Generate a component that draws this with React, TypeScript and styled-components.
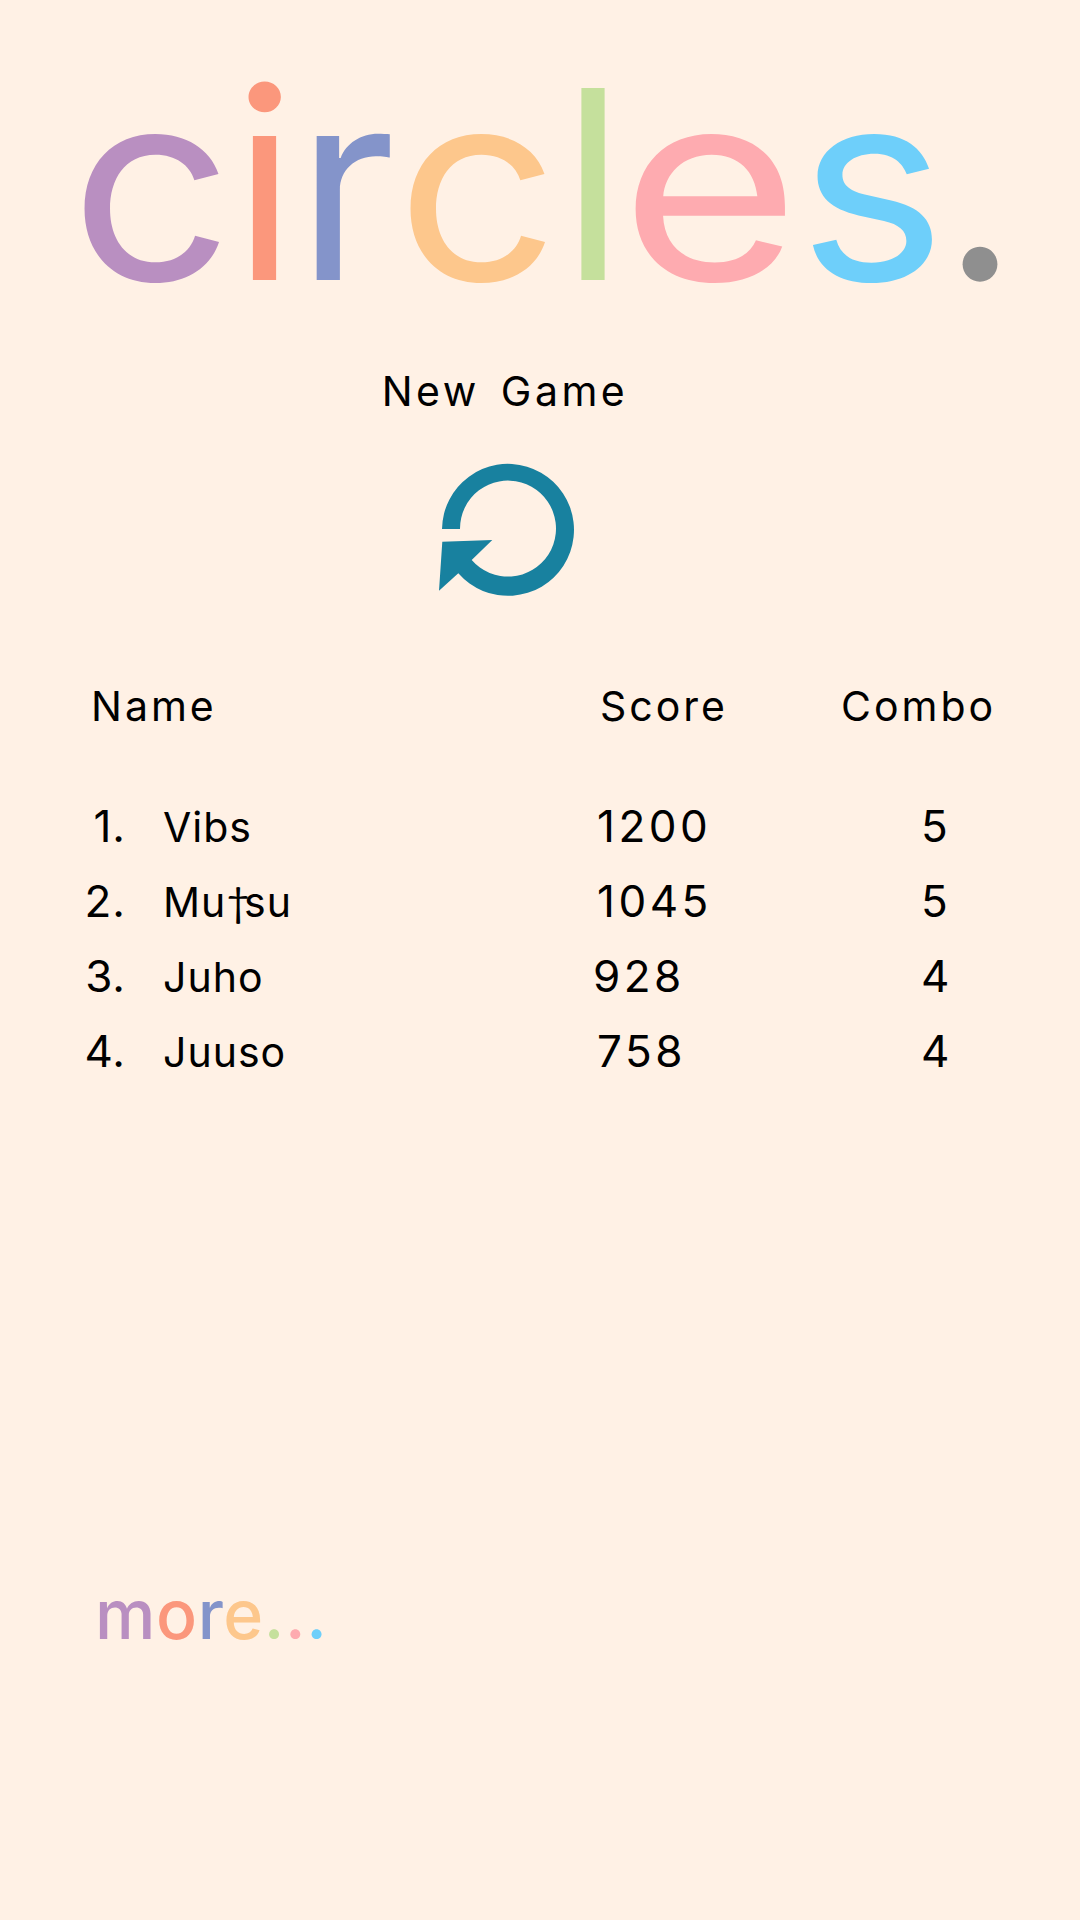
import styled, { createGlobalStyle } from 'styled-components';

const GlobalStyle = createGlobalStyle`
  html, body {
    margin: 0;
    padding: 0;
    background: #fff1e5;
  }
`;

const Page = styled.div`
  width: 1080px;
  height: 1920px;
  display: flex;
  flex-direction: column;
  background: #fff1e5;
  color: #000;
  font-family: 'Inter', sans-serif;
  font-size: 41px;
  letter-spacing: 1px;
  overflow: hidden;
`;

const Title = styled.h1`
  display: flex;
  margin: 0;
  padding: 49px 0 0 80px;
  height: 271px;
  font-size: 264px;
  font-weight: 400;
  line-height: 270px;
  letter-spacing: 0;
`;

const TitleLetter = styled.span<{ $color: string; $width: number; $stretch: number }>`
  display: flex;
  justify-content: center;
  width: ${p => p.$width}px;
  color: ${p => p.$color};
  transform: scaleX(${p => p.$stretch});
`;

const NewGame = styled.div`
  display: flex;
  flex-direction: column;
  align-items: center;
  margin-top: 46px;
  padding-right: 70px;
`;

const NewGameLabel = styled.div`
  line-height: 50px;
  letter-spacing: 3.5px;
  word-spacing: 6px;
`;

const RestartIcon = styled.svg`
  display: block;
  width: 150px;
  height: 150px;
  margin: 39px 0 0 0;
`;

const Scores = styled.div`
  display: flex;
  flex-direction: column;
  margin-top: 76px;
  padding-left: 84px;
`;

const HeaderRow = styled.div`
  display: grid;
  grid-template-columns: 509px 241px 1fr;
  padding-left: 7px;
  line-height: 50px;
  letter-spacing: 3px;
  margin-bottom: 58px;
`;

const ScoreRow = styled.div`
  display: grid;
  grid-template-columns: 79px 434px 324px 1fr;
  align-items: baseline;
  height: 75px;
  line-height: 75px;
`;

const Rank = styled.span`
  padding-right: 37px;
  font-size: 44px;
  text-align: right;
`;

const PlayerName = styled.span``;

const Dagger = styled.span`
  font-family: 'Lato', sans-serif;
  letter-spacing: -6px;
`;

const Points = styled.span<{ $short?: boolean }>`
  margin-left: ${p => (p.$short ? -4 : 0)}px;
  font-size: 44px;
  letter-spacing: 3.5px;
`;

const Combo = styled.span`
  font-size: 44px;
`;

const More = styled.a`
  display: block;
  margin-top: 480px;
  padding-left: 95px;
  font-size: 68px;
  font-weight: 500;
  line-height: 90px;
  letter-spacing: 0.6px;
`;

const MoreLetter = styled.span<{ $color: string }>`
  color: ${p => p.$color};
`;

const titleLetters = [
  { ch: 'c', color: '#b98fc1', width: 143, stretch: 1.08 },
  { ch: 'i', color: '#fb977c', width: 83, stretch: 1 },
  { ch: 'r', color: '#8494ca', width: 80, stretch: 1 },
  { ch: 'c', color: '#fdc78c', width: 183, stretch: 1.08 },
  { ch: 'l', color: '#c5e09c', width: 48, stretch: 1 },
  { ch: 'e', color: '#feabb0', width: 186, stretch: 1.17 },
  { ch: 's', color: '#6ecffa', width: 138, stretch: 1.06 },
  { ch: '.', color: '#8f8f8f', width: 78, stretch: 1 },
];

const moreLetters = [
  { ch: 'm', color: '#b98fc1' },
  { ch: 'o', color: '#fb977c' },
  { ch: 'r', color: '#8494ca' },
  { ch: 'e', color: '#fdc78c' },
  { ch: '.', color: '#c5e09c' },
  { ch: '.', color: '#feabb0' },
  { ch: '.', color: '#6ecffa' },
];

const rows = [
  { rank: '1.', name: <>Vibs</>, score: '1200', combo: 5 },
  { rank: '2.', name: <>Mu<Dagger>†</Dagger>su</>, score: '1045', combo: 5 },
  { rank: '3.', name: <>Juho</>, score: '928', combo: 4, short: true },
  { rank: '4.', name: <>Juuso</>, score: '758', combo: 4 },
];

export default function App() {
  return (
    <Page>
      <GlobalStyle />
      <Title>
        {titleLetters.map((l, i) => (
          <TitleLetter key={i} $color={l.color} $width={l.width} $stretch={l.stretch}>
            {l.ch}
          </TitleLetter>
        ))}
      </Title>
      <NewGame>
        <NewGameLabel>New Game</NewGameLabel>
        <RestartIcon viewBox="0 0 150 150">
          <path
            d="M12 74 A66 66 0 1 1 28.3 118.3 L9 135.7 L12.3 86.7 L62.3 85 L41.7 105 A48 48 0 1 0 30 74 Z"
            fill="#18819f"
          />
        </RestartIcon>
      </NewGame>
      <Scores>
        <HeaderRow>
          <span>Name</span>
          <span>Score</span>
          <span>Combo</span>
        </HeaderRow>
        {rows.map(r => (
          <ScoreRow key={r.rank}>
            <Rank>{r.rank}</Rank>
            <PlayerName>{r.name}</PlayerName>
            <Points $short={r.short}>{r.score}</Points>
            <Combo>{r.combo}</Combo>
          </ScoreRow>
        ))}
      </Scores>
      <More>
        {moreLetters.map((l, i) => (
          <MoreLetter key={i} $color={l.color}>
            {l.ch}
          </MoreLetter>
        ))}
      </More>
    </Page>
  );
}
